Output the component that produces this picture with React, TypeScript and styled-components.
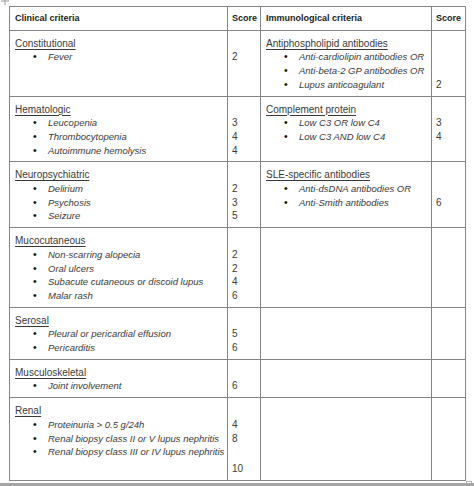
import React from "react";
import styled, { createGlobalStyle } from "styled-components";

type Entry = { heading: string; items: string[]; scores: string[] };

const clinical: Entry[] = [
  { heading: "Constitutional", items: ["Fever"], scores: ["", "2"] },
  {
    heading: "Hematologic",
    items: ["Leucopenia", "Thrombocytopenia", "Autoimmune hemolysis"],
    scores: ["", "3", "4", "4"],
  },
  {
    heading: "Neuropsychiatric",
    items: ["Delirium", "Psychosis", "Seizure"],
    scores: ["", "2", "3", "5"],
  },
  {
    heading: "Mucocutaneous",
    items: [
      "Non-scarring alopecia",
      "Oral ulcers",
      "Subacute cutaneous or discoid lupus",
      "Malar rash",
    ],
    scores: ["", "2", "2", "4", "6"],
  },
  {
    heading: "Serosal",
    items: ["Pleural or pericardial effusion", "Pericarditis"],
    scores: ["", "5", "6"],
  },
  {
    heading: "Musculoskeletal",
    items: ["Joint involvement"],
    scores: ["", "6"],
  },
  {
    heading: "Renal",
    items: [
      "Proteinuria > 0.5 g/24h",
      "Renal biopsy class II or V lupus nephritis",
      "Renal biopsy class III or IV lupus nephritis",
    ],
    scores: ["", "4", "8", "", "10"],
  },
];

const immuno: (Entry | null)[] = [
  {
    heading: "Antiphospholipid antibodies",
    items: [
      "Anti-cardiolipin antibodies OR",
      "Anti-beta-2 GP antibodies OR",
      "Lupus anticoagulant",
    ],
    scores: ["", "", "", "2"],
  },
  {
    heading: "Complement protein",
    items: ["Low C3 OR low C4", "Low C3 AND low C4"],
    scores: ["", "3", "4"],
  },
  {
    heading: "SLE-specific antibodies",
    items: ["Anti-dsDNA antibodies OR", "Anti-Smith antibodies"],
    scores: ["", "", "6"],
  },
  null,
  null,
  null,
  null,
];

const GlobalStyle = createGlobalStyle`
  html, body {
    margin: 0;
    background: #ffffff;
  }
  body {
    font-family: "Liberation Sans", Arial, sans-serif;
    color: #3a3a3a;
  }
`;

const Page = styled.div`
  position: relative;
  width: 474px;
  height: 486px;
  padding: 6px 0 0 9px;
  box-sizing: border-box;
  overflow: hidden;
`;

const MoveHandle = styled.svg`
  position: absolute;
  left: 1px;
  top: -3px;
`;

const Grid = styled.table`
  border-collapse: collapse;
  table-layout: fixed;
  width: 456px;
`;

const HeadCell = styled.th<{ $narrow?: boolean }>`
  border: 1px solid #858585;
  padding: ${(p) => (p.$narrow ? "5px 2px 4px 4px" : "5px 5px 4px 5px")};
  font-size: 9px;
  line-height: 13.7px;
  font-weight: 700;
  color: #1c1c1c;
  text-align: left;
  white-space: nowrap;
`;

const Cell = styled.td<{ $narrow?: boolean }>`
  border: 1px solid #858585;
  padding: ${(p) => (p.$narrow ? "6px 2px 4px 4px" : "6px 4px 4px 5px")};
  vertical-align: top;
  font-size: 10px;
  line-height: 13.7px;
  white-space: nowrap;
`;

const Heading = styled.div`
  text-decoration: underline;
  text-underline-offset: 1.5px;
  text-decoration-thickness: 1px;
`;

const Item = styled.div`
  display: flex;
  padding-left: 18px;
  font-style: italic;
  font-size: 9.5px;
`;

const Bullet = styled.span`
  width: 15px;
  flex: none;
  font-style: normal;
  font-size: 10.5px;
  line-height: 13.7px;
  color: #111111;
`;

const ScoreLine = styled.div<{ $late?: boolean }>`
  height: 13.7px;
  margin-top: ${(p) => (p.$late ? "3px" : "0")};
`;

const BottomBar = styled.div`
  position: absolute;
  left: 0;
  right: 0;
  bottom: 0;
  height: 3px;
  background: #a4a4a4;
`;

const ResizeHandle = styled.div`
  position: absolute;
  left: 466px;
  top: 481px;
  width: 4px;
  height: 4px;
  border: 1px solid #b0b0b0;
  background: #ffffff;
`;

const Criteria = ({ entry }: { entry: Entry | null }) => (
  <Cell>
    {entry && (
      <>
        <Heading>{entry.heading}</Heading>
        {entry.items.map((it) => (
          <Item key={it}>
            <Bullet>•</Bullet>
            {it}
          </Item>
        ))}
      </>
    )}
  </Cell>
);

const Scores = ({ entry, lateLast }: { entry: Entry | null; lateLast?: boolean }) => (
  <Cell $narrow>
    {entry &&
      entry.scores.map((s, i) => (
        <ScoreLine key={i} $late={lateLast && i === entry.scores.length - 1}>
          {s}
        </ScoreLine>
      ))}
  </Cell>
);

export default function App() {
  return (
    <>
      <GlobalStyle />
      <Page>
        <MoveHandle width="8" height="8" viewBox="0 0 8 8">
          <path d="M4 0v8M0 4h8" stroke="#9a9a9a" strokeWidth="1" fill="none" />
        </MoveHandle>
        <Grid>
          <colgroup>
            <col style={{ width: 218 }} />
            <col style={{ width: 33 }} />
            <col style={{ width: 171 }} />
            <col style={{ width: 34 }} />
          </colgroup>
          <thead>
            <tr>
              <HeadCell>Clinical criteria</HeadCell>
              <HeadCell $narrow>Score</HeadCell>
              <HeadCell>Immunological criteria</HeadCell>
              <HeadCell $narrow>Score</HeadCell>
            </tr>
          </thead>
          <tbody>
            {clinical.map((c, i) => (
              <tr key={c.heading}>
                <Criteria entry={c} />
                <Scores entry={c} lateLast={c.heading === "Renal"} />
                <Criteria entry={immuno[i]} />
                <Scores entry={immuno[i]} />
              </tr>
            ))}
          </tbody>
        </Grid>
        <ResizeHandle />
        <BottomBar />
      </Page>
    </>
  );
}
